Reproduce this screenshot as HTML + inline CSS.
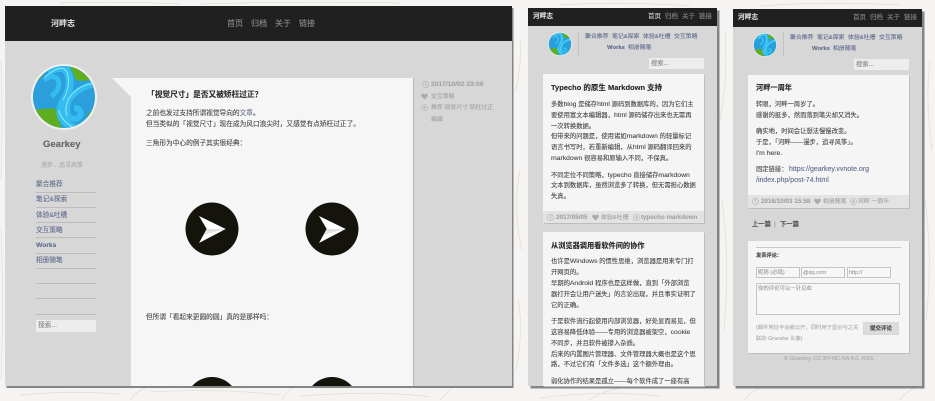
<!DOCTYPE html>
<html lang="zh"><head><meta charset="utf-8"><title>河畔志</title>
<style>
html,body{margin:0;padding:0;overflow:hidden;width:935px;height:401px}
body{position:relative;background:#f6f4f2;font-family:"Liberation Sans","Noto Sans CJK SC",sans-serif}
.w{position:absolute;background:#d7d7d7;box-shadow:2.500px 2.500px 0 #858585}
.a,.t{position:absolute}
.t{white-space:nowrap;line-height:12px;color:#444;font-size:6.700px;filter:blur(.3px);-webkit-text-stroke:.1px currentColor}
.p{font-size:6.300px}
.l{font-size:6.800px;font-style:normal}
.h{background:#202020}
.nav{color:#8a8a8a}
.brand{color:#ddd;font-weight:bold}
.lnk{color:#5f6b8c}
.m{color:#a2a2a2;font-size:5.900px}
.d{font-size:6.300px;font-weight:bold}
.c{background:#f5f5f5;box-shadow:1px 1px 0 #bdbdbd}
.f{background:#e3e3e3;box-shadow:1px 1px 0 #bdbdbd}
.in{position:absolute;background:#f7f7f7;border:1px solid #c4c4c4;box-sizing:border-box}
.s{position:absolute;background:#ededed}
svg{position:absolute}
</style></head><body>
<svg style="left:0;top:0" width="935" height="401" fill="none" stroke="#dfdbd6" stroke-width=".7">
<path d="M130 400Q135 392 145 388M282 400Q286 392 292 388M20 395Q70 390 120 394M150 392Q220 388 280 395M300 396Q380 390 430 397M440 400Q445 395 452 388M520 40Q522 60 516 90M520 170Q512 210 522 250M518 300Q524 330 516 370M725 30Q728 80 720 120M722 200Q730 260 724 330M930 60Q925 100 932 150M925 200Q933 260 926 320M540 398Q600 390 660 396M590 400Q600 392 620 388M745 400Q750 392 760 388M900 400Q905 392 915 388M60 3Q120 1 180 4M200 4Q300 1 400 3M560 5Q620 1 690 6M760 6Q830 1 900 5M1 60Q3 120 1 180M1 230Q4 300 1 380"/>
</svg>

<!-- ========== window 1 ========== -->
<div class="w" style="left:5px;top:6px;width:507px;height:380px;box-shadow:1.500px 2px 0 #858585"></div>
<div class="a h" style="left:5px;top:6px;width:507px;height:35px"></div>
<span class="t brand" style="left:51px;top:18px;font-size:8px">河畔志</span>
<span class="t nav" style="left:227px;top:18px;font-size:8px">首页</span>
<span class="t nav" style="left:251px;top:18px;font-size:8px">归档</span>
<span class="t nav" style="left:275px;top:18px;font-size:8px">关于</span>
<span class="t nav" style="left:299px;top:18px;font-size:8px">链接</span>

<svg style="left:112px;top:78px" width="302" height="308"><path d="M0 0H301V308H19V19Z" fill="#f6f6f6"/><path d="M301.500 0V308" stroke="#b5b5b5"/></svg>

<svg width="66" height="66" viewBox="0 0 66 66" style="left:31px;top:64px"><use href="#av"/></svg>
<span class="t" style="left:43px;top:139px;font-size:9.500px;color:#666;font-weight:bold">Gearkey</span>
<span class="t" style="left:41px;top:160px;font-size:6px;color:#aaa">漫步、追寻风筝</span>

<span class="t lnk" style="left:36px;top:179px">聚合推荐</span>
<span class="t lnk" style="left:36px;top:194px">笔记&amp;探索</span>
<span class="t lnk" style="left:36px;top:210px">体验&amp;吐槽</span>
<span class="t lnk" style="left:36px;top:225px">交互策略</span>
<span class="t lnk" style="left:36px;top:240px;font-weight:bold">Works</span>
<span class="t lnk" style="left:36px;top:255px">相册随笔</span>
<div class="a" style="left:36px;top:192px;width:60px;height:1px;background:#bcbcbc"></div>
<div class="a" style="left:36px;top:207px;width:60px;height:1px;background:#bcbcbc"></div>
<div class="a" style="left:36px;top:222px;width:60px;height:1px;background:#bcbcbc"></div>
<div class="a" style="left:36px;top:237px;width:60px;height:1px;background:#bcbcbc"></div>
<div class="a" style="left:36px;top:253px;width:60px;height:1px;background:#bcbcbc"></div>
<div class="a" style="left:36px;top:268px;width:60px;height:1px;background:#bcbcbc"></div>
<div class="a" style="left:36px;top:283px;width:60px;height:1px;background:#bcbcbc"></div>
<div class="a" style="left:36px;top:298px;width:60px;height:1px;background:#bcbcbc"></div>
<div class="a" style="left:36px;top:314px;width:60px;height:1px;background:#bcbcbc"></div>
<div class="s" style="left:36px;top:320px;width:60px;height:12px"></div>
<span class="t" style="left:38px;top:320px;color:#888">搜索...</span>

<span class="t" style="left:147px;top:89px;font-size:7.700px;font-weight:bold;color:#262626">「视觉尺寸」是否又被矫枉过正&#65311;</span>
<span class="t" style="left:146px;top:108px">之前也发过支持所谓视觉导向的<span style="color:#5f6b8c">文章</span>。</span>
<span class="t" style="left:146px;top:119px">但当类似的「视觉尺寸」现在成为风口浪尖时&#65292;又感觉有点矫枉过正了。</span>
<span class="t" style="left:146px;top:138px">三角形为中心的例子其实很经典&#65306;</span>
<span class="t" style="left:146px;top:312px">但所谓「看起来更圆的圆」真的是那样吗&#65306;</span>

<svg width="54" height="54" viewBox="0 0 54 54" style="left:185px;top:202px"><use href="#send"/></svg>
<svg width="54" height="54" viewBox="0 0 54 54" style="left:305px;top:202px"><use href="#send"/></svg>
<svg width="54" height="9" viewBox="0 0 54 9" style="left:185px;top:377px"><path d="M7.100 9A26.500 26.500 0 0 1 46.900 9Z" fill="#14130c"/></svg>
<svg width="54" height="9" viewBox="0 0 54 9" style="left:305px;top:377px"><path d="M7.100 9A26.500 26.500 0 0 1 46.900 9Z" fill="#14130c"/></svg>

<svg width="7" height="7" viewBox="0 0 7 7" style="left:422px;top:81px" fill="none" stroke="#b4b4b4" stroke-width=".7"><circle cx="3.500" cy="3.500" r="3"/><path d="M3.500 1.500V3.700L5 4.500"/></svg>
<span class="t m" style="left:431px;top:79px;font-size:6.700px;font-weight:bold">2017/10/02 23:06</span>
<svg width="7" height="7" viewBox="0 0 7 7" style="left:421px;top:92.500px"><use href="#hrt"/></svg>
<span class="t m" style="left:431px;top:90.500px">交互策略</span>
<svg width="7" height="7" viewBox="0 0 7 7" style="left:421px;top:104px"><use href="#tag"/></svg>
<span class="t m" style="left:431px;top:102px">推荐 视觉尺寸 矫枉过正</span>
<span class="t m" style="left:431px;top:114px">编辑</span>

<!-- ========== window 2 ========== -->
<div class="w" style="left:528px;top:8px;width:189px;height:378px"></div>
<div class="a h" style="left:528px;top:8px;width:189px;height:18px"></div>
<span class="t brand" style="left:533px;top:11px;font-size:6.700px">河畔志</span>
<span class="t" style="left:648px;top:11px;font-size:6.500px;color:#ddd">首页</span>
<span class="t nav" style="left:665px;top:11px;font-size:6.500px">归档</span>
<span class="t nav" style="left:682px;top:11px;font-size:6.500px">关于</span>
<span class="t nav" style="left:699px;top:11px;font-size:6.500px">链接</span>
<svg width="24" height="24" viewBox="0 0 66 66" style="left:548px;top:32px"><use href="#av"/></svg>
<div class="a" style="left:578px;top:32px;width:1px;height:24px;background:#c2c2c2"></div>
<span class="t lnk" style="left:585px;top:31px;font-size:5.900px">聚合推荐</span>
<span class="t lnk" style="left:612px;top:31px;font-size:5.900px">笔记&amp;探索</span>
<span class="t lnk" style="left:643px;top:31px;font-size:5.900px">体验&amp;吐槽</span>
<span class="t lnk" style="left:674px;top:31px;font-size:5.900px">交互策略</span>
<span class="t lnk" style="left:607px;top:42px;font-size:5.900px;font-weight:bold">Works</span>
<span class="t lnk" style="left:628px;top:42px;font-size:5.900px">相册随笔</span>
<div class="s" style="left:649px;top:58px;width:55px;height:11px"></div>
<span class="t" style="left:651px;top:58px;color:#888;font-size:6.300px">搜索...</span>

<div class="a c" style="left:543px;top:74px;width:161px;height:149px"></div>
<div class="a f" style="left:543px;top:211px;width:161px;height:12px"></div>
<span class="t" style="left:551px;top:82px;font-size:7.500px;font-weight:bold;color:#222">Typecho 的原生 Markdown 支持</span>
<span class="t p" style="left:551px;top:99px">多数<i class="l">blog</i> 是储存<i class="l">html</i> 源码到数据库的&#65292;因为它们主</span>
<span class="t p" style="left:551px;top:110px">要使用富文本编辑器&#65292;<i class="l">html</i> 源码储存出来也无需再</span>
<span class="t p" style="left:551px;top:121px">一次转换数据。</span>
<span class="t p" style="left:551px;top:131px">但带来的问题是&#65292;使用诸如<i class="l">markdown</i> 的轻量标记</span>
<span class="t p" style="left:551px;top:142px">语言书写时&#65292;若重新编辑&#65292;从<i class="l">html</i> 源码翻译回来的</span>
<span class="t p" style="left:551px;top:153px"><i class="l">markdown</i> 很容易和原输入不同&#65292;不保真。</span>
<span class="t p" style="left:551px;top:169.500px">不同定位不同策略&#65292;<i class="l">typecho</i> 直接储存<i class="l">markdown</i></span>
<span class="t p" style="left:551px;top:180px">文本到数据库&#65292;虽然浏览多了转换&#65292;但无需担心数据</span>
<span class="t p" style="left:551px;top:191px">失真。</span>
<svg width="7" height="7" viewBox="0 0 7 7" style="left:547px;top:214px" fill="none" stroke="#b4b4b4" stroke-width=".7"><circle cx="3.500" cy="3.500" r="3"/><path d="M3.500 1.500V3.700L5 4.500"/></svg>
<span class="t m d" style="left:556px;top:212px">2017/05/05</span>
<svg width="7" height="7" viewBox="0 0 7 7" style="left:592px;top:213.500px"><use href="#hrt"/></svg>
<span class="t m" style="left:601px;top:212px">体验&amp;吐槽</span>
<svg width="7" height="7" viewBox="0 0 7 7" style="left:633px;top:213.500px"><use href="#tag"/></svg>
<span class="t m" style="left:641px;top:212px;font-size:6.200px;font-weight:bold">typecho markdown</span>

<div class="a c" style="left:543px;top:232px;width:161px;height:154px"></div>
<span class="t" style="left:551px;top:240px;font-size:7.200px;font-weight:bold;color:#222">从浏览器调用看软件间的协作</span>
<span class="t p" style="left:551px;top:256px">也许是<i class="l">Windows</i> 的惯性思维&#65292;浏览器是用来专门打</span>
<span class="t p" style="left:551px;top:267px">开网页的。</span>
<span class="t p" style="left:551px;top:278px">早期的<i class="l">Android</i> 程序也是这样做&#65292;直到「外部浏览</span>
<span class="t p" style="left:551px;top:289px">器打开会让用户迷失」的言论出现&#65292;并且事实证明了</span>
<span class="t p" style="left:551px;top:300px">它的正确。</span>
<span class="t p" style="left:551px;top:316px">于是软件流行起使用内部浏览器&#65292;好处显而易见&#65292;但</span>
<span class="t p" style="left:551px;top:327px">这容易降低体验——专用的浏览器被架空&#65292;<i class="l">cookie</i></span>
<span class="t p" style="left:551px;top:338px">不同步&#65292;并且软件被掺入杂质。</span>
<span class="t p" style="left:551px;top:348.500px">后来的内置图片管理器、文件管理器大概也是这个思</span>
<span class="t p" style="left:551px;top:359px">路&#65292;不过它们有「文件多选」这个额外理由。</span>
<span class="t p" style="left:551px;top:376px">弱化协作的结果是孤立——每个软件成了一座有高</span>

<!-- ========== window 3 ========== -->
<div class="w" style="left:733px;top:9px;width:189px;height:377px"></div>
<div class="a h" style="left:733px;top:9px;width:189px;height:18px"></div>
<span class="t brand" style="left:738px;top:12px;font-size:6.700px">河畔志</span>
<span class="t nav" style="left:853px;top:12px;font-size:6.500px">首页</span>
<span class="t nav" style="left:870px;top:12px;font-size:6.500px">归档</span>
<span class="t nav" style="left:887px;top:12px;font-size:6.500px">关于</span>
<span class="t nav" style="left:904px;top:12px;font-size:6.500px">链接</span>
<svg width="24" height="24" viewBox="0 0 66 66" style="left:753px;top:33px"><use href="#av"/></svg>
<div class="a" style="left:783px;top:33px;width:1px;height:24px;background:#c2c2c2"></div>
<span class="t lnk" style="left:790px;top:32px;font-size:5.900px">聚合推荐</span>
<span class="t lnk" style="left:817px;top:32px;font-size:5.900px">笔记&amp;探索</span>
<span class="t lnk" style="left:848px;top:32px;font-size:5.900px">体验&amp;吐槽</span>
<span class="t lnk" style="left:879px;top:32px;font-size:5.900px">交互策略</span>
<span class="t lnk" style="left:812px;top:43px;font-size:5.900px;font-weight:bold">Works</span>
<span class="t lnk" style="left:833px;top:43px;font-size:5.900px">相册随笔</span>
<div class="s" style="left:854px;top:59px;width:55px;height:11px"></div>
<span class="t" style="left:856px;top:59px;color:#888;font-size:6.300px">搜索...</span>

<div class="a c" style="left:748px;top:75px;width:161px;height:133px"></div>
<div class="a f" style="left:748px;top:195px;width:161px;height:13px"></div>
<span class="t" style="left:756px;top:82px;font-size:7.200px;font-weight:bold;color:#222">河畔一周年</span>
<span class="t p" style="left:756px;top:99px">转眼&#65292;河畔一周岁了。</span>
<span class="t p" style="left:756px;top:109.500px">感谢的挺多&#65292;然而落到笔尖却又消失。</span>
<span class="t p" style="left:756px;top:126px">确实地&#65292;时间会让想法慢慢改变。</span>
<span class="t p" style="left:756px;top:137px">于是&#65292;「河畔——漫步&#65292;追寻风筝」。</span>
<span class="t p" style="left:756px;top:148px"><i class="l">I'm here.</i></span>
<span class="t p" style="left:756px;top:164px">固定链接&#65306;</span>
<span class="t" style="left:789px;top:164px;font-size:7px;color:#5f6b8c">https://gearkey.vvnote.org</span>
<span class="t" style="left:756px;top:175px;font-size:7px;color:#5f6b8c">/index.php/post-74.html</span>
<svg width="7" height="7" viewBox="0 0 7 7" style="left:752px;top:198px" fill="none" stroke="#b4b4b4" stroke-width=".7"><circle cx="3.500" cy="3.500" r="3"/><path d="M3.500 1.500V3.700L5 4.500"/></svg>
<span class="t m d" style="left:761px;top:196px">2016/10/03 15:58</span>
<svg width="7" height="7" viewBox="0 0 7 7" style="left:814px;top:198px"><use href="#hrt"/></svg>
<span class="t m" style="left:823px;top:196px">相册随笔</span>
<svg width="7" height="7" viewBox="0 0 7 7" style="left:850px;top:198px"><use href="#tag"/></svg>
<span class="t m" style="left:858px;top:196px">河畔 一周年</span>

<span class="t p" style="left:752px;top:218.500px;font-weight:bold;color:#555">上一篇</span>
<span class="t p" style="left:774px;top:218.500px;color:#888">|</span>
<span class="t p" style="left:780px;top:218.500px;font-weight:bold;color:#555">下一篇</span>

<div class="a c" style="left:748px;top:241px;width:161px;height:112px"></div>
<div class="a" style="left:756px;top:247px;width:145px;height:1px;background:#c8c8c8"></div>
<span class="t" style="left:756px;top:250px;font-size:5.200px;font-weight:bold;color:#444">发表评论&#65306;</span>
<div class="in" style="left:756px;top:267px;width:44px;height:11px"></div>
<div class="in" style="left:801px;top:267px;width:44px;height:11px"></div>
<div class="in" style="left:847px;top:267px;width:44px;height:11px"></div>
<span class="t" style="left:758px;top:266.500px;font-size:5.400px;color:#999">昵称 (必填)</span>
<span class="t" style="left:803px;top:266.500px;font-size:5.400px;color:#999">@qq.com</span>
<span class="t" style="left:849px;top:266.500px;font-size:5.400px;color:#999">http://</span>
<div class="in" style="left:756px;top:283px;width:144px;height:32px"></div>
<span class="t" style="left:758px;top:283px;font-size:5.400px;color:#999">你的评论可以一针见血</span>
<span class="t" style="left:756px;top:322px;font-size:5.300px;color:#aaa">(邮件地址不会被公开&#65292;同时用于显示与之关</span>
<span class="t" style="left:756px;top:333px;font-size:5.300px;color:#aaa">联的 Gravatar 头像)</span>
<div class="a" style="left:864px;top:323px;width:34px;height:11px;background:#dcdcdc;box-shadow:0 0 0 .5px #bbb"></div>
<span class="t" style="left:870px;top:322.500px;font-size:5.500px;font-weight:bold;color:#444">提交评论</span>
<span class="t" style="left:784px;top:353px;font-size:5.600px;color:#a8a8a8">© Gearkey. CC BY-NC-SA 4.0. RSS.</span>

<svg width="0" height="0" style="left:0;top:0">
<defs>
<clipPath id="cc"><circle cx="33" cy="33" r="31"/></clipPath>
<symbol id="av" viewBox="0 0 66 66">
<circle cx="33" cy="33" r="33" fill="#f0f0f0"/>
<circle cx="33" cy="33" r="31" fill="#2a9fdc"/>
<g clip-path="url(#cc)">
<path d="M38 1Q42 8 45 16Q50 18 66 15V0Z" fill="#5fae22"/>
<path d="M0 48Q8 44 13 45Q20 44 25 45Q26 52 30 62V66H0Z" fill="#5fae22"/>
<path d="M55 55Q57 50 60 47L66 48V60Z" fill="#5fae22"/>
<path d="M2 20Q8 18 14 8L8 3L0 14Z" fill="#6f9a46"/>
<path d="M17 8Q34 -2 38 12Q41 24 33 36Q28 44 30 52Q34 60 44 65" fill="none" stroke="#34bdf0" stroke-width="8"/>
<path d="M66 20Q48 22 38 36Q34 46 38 53Q46 58 50 50Q49 44 43 44" fill="none" stroke="#34bdf0" stroke-width="6"/>
<path d="M13 16Q24 8 28 18Q28 28 20 32" fill="none" stroke="#34bdf0" stroke-width="5"/>
<path d="M66 19Q48 20 38 34Q33 45 36 52" fill="none" stroke="#8fe8fa" stroke-width="1"/>
<path d="M14 13Q34 -4 37 12Q39 24 32 36" fill="none" stroke="#8fe8fa" stroke-width="1"/>
<path d="M28 46Q30 58 46 65" fill="none" stroke="#8fe8fa" stroke-width="1"/>
</g>
</symbol>
<symbol id="send" viewBox="0 0 54 54">
<circle cx="27" cy="27" r="26.500" fill="#14130c"/>
<path d="M40.700 27L14 14L21.700 27L14 41Z" fill="#fff"/>
<path d="M40.700 27L21.700 27L18.500 33Z" fill="#e2e2e2"/>
</symbol>
<symbol id="hrt" viewBox="0 0 7 7"><path d="M3.500 6.500L.6 3.400C-.4 1.800 .8 .4 2 .6Q3 .7 3.500 1.700Q4 .7 5 .6C6.200 .4 7.400 1.800 6.400 3.400Z" fill="#a9a9a9"/></symbol>
<symbol id="tag" viewBox="0 0 7 7"><circle cx="3.500" cy="3.500" r="3" fill="none" stroke="#b4b4b4" stroke-width=".6"/><circle cx="3.500" cy="3.500" r="1.200" fill="#b4b4b4"/></symbol>
</defs>
</svg>
</body></html>
